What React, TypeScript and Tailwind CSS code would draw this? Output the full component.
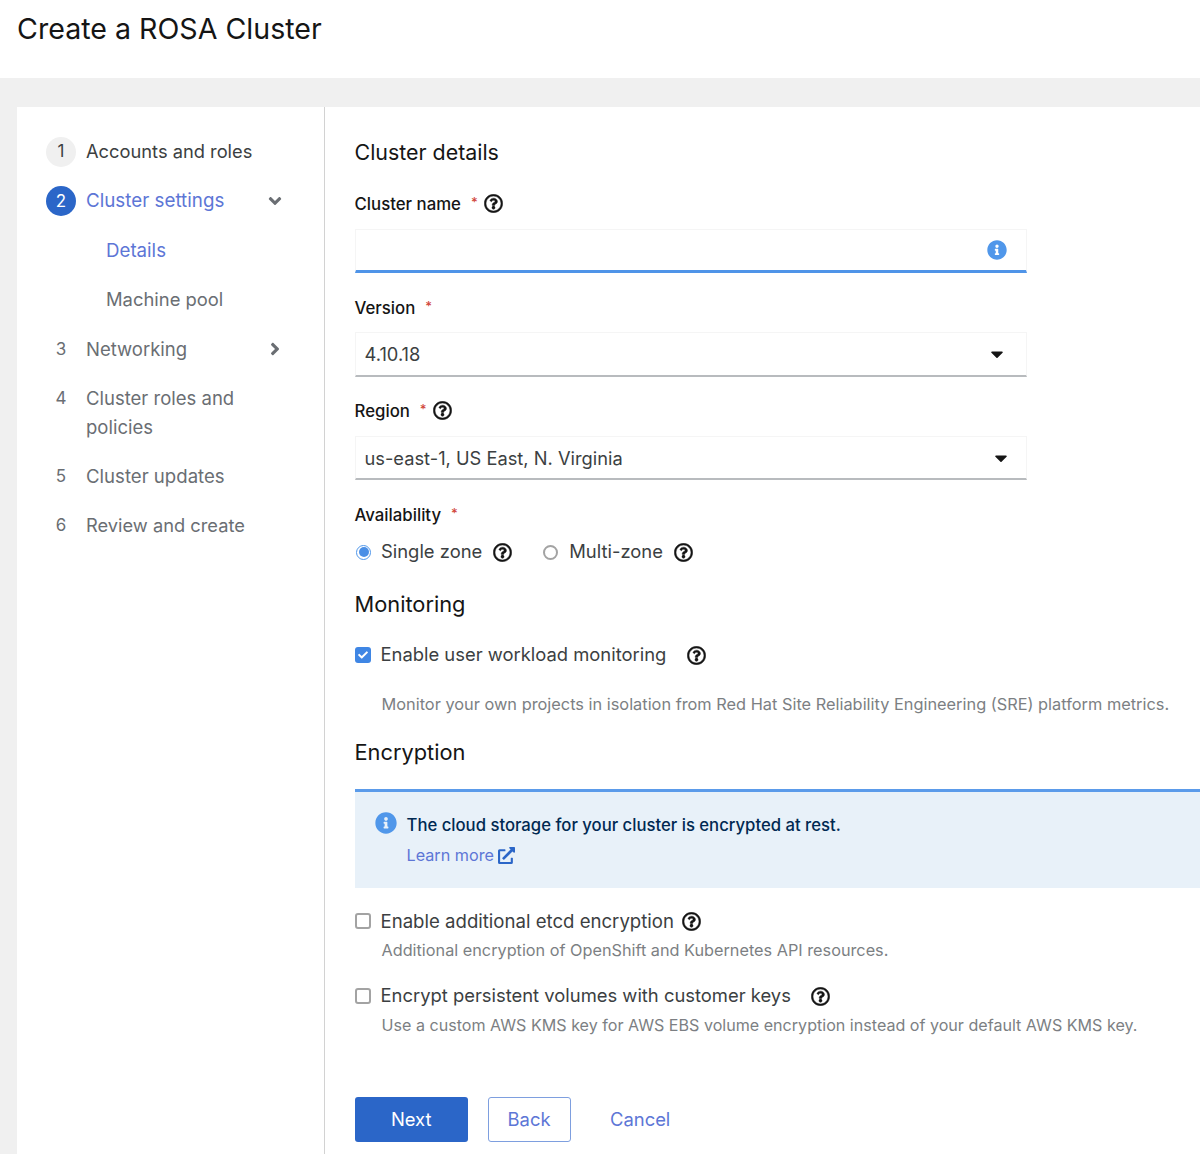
import { ReactNode } from 'react';
import {
  FaAngleDown,
  FaAngleRight,
  FaCaretDown,
  FaCheck,
  FaExternalLinkAlt,
  FaInfoCircle,
  FaRegQuestionCircle,
} from 'react-icons/fa';

function Help({ className = '' }: { className?: string }) {
  return (
    <FaRegQuestionCircle
      stroke="currentColor"
      strokeWidth={12}
      className={`h-[19px] w-[19px] shrink-0 text-[#151515] ${className}`}
    />
  );
}

function Label({ text, children }: { text: string; children?: ReactNode }) {
  return (
    <div className="flex h-[26px] items-center pt-[2px] text-[16.8px] font-medium text-[#151515]">
      <span>{text}</span>
      <span className="-mt-[5px] ml-[10px] text-[13px] text-[#d1463a]">*</span>
      {children}
    </div>
  );
}

function Select({ value, height, caretClass }: { value: string; height: string; caretClass: string }) {
  return (
    <div className={`flex w-[672px] items-center border border-b-2 border-[#f5f5f5] border-b-[#b8bbbe] pl-[9px] text-[18.3px] text-[#3c3f42] ${height}`}>
      <span className="pt-[2px]">{value}</span>
      <FaCaretDown className={`ml-auto h-[20px] w-[20px] text-[#151515] ${caretClass}`} />
    </div>
  );
}

function Checkbox({ label, gap, textClass }: { label: string; gap: string; textClass: string }) {
  return (
    <div className="flex h-[28px] items-center text-[#3c3f42]">
      <span className="h-[16px] w-[16px] rounded-[3px] border-2 border-[#a3a3a3] bg-white" />
      <span className={`ml-[10px] ${textClass}`}>{label}</span>
      <Help className={gap} />
    </div>
  );
}

const steps = [
  { n: '3', label: 'Networking', size: 'text-[18.5px]', arrow: true },
  { n: '4', label: 'Cluster roles and policies', size: 'text-[18.5px]' },
  { n: '5', label: 'Cluster updates', size: 'text-[18.6px]' },
  { n: '6', label: 'Review and create', size: 'text-[18.3px]' },
];

export default function App() {
  return (
    <div className="h-[1154px] overflow-hidden bg-[#f0f0f0] font-['Inter',sans-serif]">
      <header className="flex h-[78px] bg-white pl-[17px] pt-[8px]">
        <h1 className="text-[28.6px] leading-[42px] text-[#151515]">Create a ROSA Cluster</h1>
      </header>
      <div className="mt-[29px] ml-[17px] flex h-[1047px] bg-white">
        <nav className="w-[308px] shrink-0 border-r border-[#d2d2d2] pl-[29px] pr-[39px] pt-[30px] text-[18.5px] text-[#6a6e73]">
          <div className="flex h-[30px] items-center text-[#3c3f42]">
            <span className="flex h-[30px] w-[30px] items-center justify-center rounded-full bg-[#f0f0f0] text-[17px]">1</span>
            <span className="ml-[10px] text-[18.3px]">Accounts and roles</span>
          </div>
          <div className="mt-[19.4px] flex h-[30px] items-center text-[#5d76d6]">
            <span className="flex h-[30px] w-[30px] items-center justify-center rounded-full bg-[#2b66c8] text-[17px] text-white">2</span>
            <span className="ml-[10px] text-[18.8px]">Cluster settings</span>
            <FaAngleDown className="ml-auto h-[20px] w-[20px] text-[#6a6e73]" />
          </div>
          <div className="mt-[19.4px] flex h-[30px] items-center pl-[60px] text-[18.7px] text-[#5d76d6]">Details</div>
          <div className="mt-[19.4px] flex h-[30px] items-center pl-[60px] text-[18.4px]">Machine pool</div>
          {steps.map((s) => (
            <div key={s.n} className="mt-[19.4px] flex items-start leading-[29.6px]">
              <span className="w-[30px] shrink-0 text-center text-[17px]">{s.n}</span>
              <span className={`ml-[10px] w-[175px] ${s.size}`}>{s.label}</span>
              {s.arrow && <FaAngleRight className="ml-auto mt-[4px] h-[20px] w-[20px] text-[#6a6e73]" />}
            </div>
          ))}
        </nav>
        <main className="flex min-w-0 flex-1 flex-col pl-[29.5px] pt-[30px]">
          <h2 className="h-[30px] text-[21.4px] leading-[30px] text-[#151515]">Cluster details</h2>
          <div className="mt-[24px]">
            <Label text="Cluster name">
              <Help className="-mt-[4px] ml-[6px]" />
            </Label>
          </div>
          <div className="mt-[12px] flex h-[44px] w-[672px] items-center border border-b-[3px] border-[#f5f5f5] border-b-[#4f94e8] pr-[19px]">
            <FaInfoCircle className="ml-auto h-[20px] w-[20px] text-[#5097ea]" />
          </div>
          <div className="mt-[22px]">
            <Label text="Version" />
          </div>
          <div className="mt-[11px]">
            <Select value="4.10.18" height="h-[45px]" caretClass="mr-[19px]" />
          </div>
          <div className="mt-[21px]">
            <Label text="Region">
              <Help className="-mt-[4px] ml-[6px]" />
            </Label>
          </div>
          <div className="mt-[12px]">
            <Select value="us-east-1, US East, N. Virginia" height="h-[44px]" caretClass="mr-[15px]" />
          </div>
          <div className="mt-[22px]">
            <Label text="Availability" />
          </div>
          <div className="mt-[10px] flex h-[28px] items-center text-[18.4px] text-[#3c3f42]">
            <span className="ml-[1.5px] flex h-[15px] w-[15px] items-center justify-center rounded-full border border-[#5097ea]">
              <span className="h-[10px] w-[10px] rounded-full bg-[#4a8fe6]" />
            </span>
            <span className="ml-[10px]">Single zone</span>
            <Help className="ml-[11px]" />
            <span className="ml-[31px] h-[15px] w-[15px] rounded-full border-2 border-[#a3a3a3]" />
            <span className="ml-[11px]">Multi-zone</span>
            <Help className="ml-[11px]" />
          </div>
          <h2 className="mt-[23px] h-[30px] text-[21.8px] leading-[30px] text-[#151515]">Monitoring</h2>
          <div className="mt-[22px] flex h-[28px] items-center text-[18.4px] text-[#3c3f42]">
            <span className="flex h-[16px] w-[16px] items-center justify-center rounded-[3px] bg-[#3f86e4]">
              <FaCheck className="h-[10px] w-[10px] text-white" />
            </span>
            <span className="ml-[10px]">Enable user workload monitoring</span>
            <Help className="ml-[21px]" />
          </div>
          <p className="mt-[23px] h-[24px] pl-[27px] text-[16.35px] leading-[24px] whitespace-nowrap text-[#7c7f83]">
            Monitor your own projects in isolation from Red Hat Site Reliability Engineering (SRE) platform metrics.
          </p>
          <h2 className="mt-[21px] h-[30px] text-[21.8px] leading-[30px] text-[#151515]">Encryption</h2>
          <div className="mt-[22px] flex h-[99px] border-t-[3px] border-[#5b9bea] bg-[#e8f1f9] pl-[20px] pt-[20px]">
            <FaInfoCircle className="h-[22px] w-[22px] shrink-0 text-[#5097ea]" />
            <div className="ml-[10px]">
              <div className="mt-[1px] text-[16.7px] leading-[24px] font-medium text-[#002952]">
                The cloud storage for your cluster is encrypted at rest.
              </div>
              <div className="mt-[6px] flex items-center text-[16.2px] leading-[24px] text-[#5d76d6]">
                Learn more
                <FaExternalLinkAlt className="ml-[4px] h-[17px] w-[17px] text-[#2b66c8]" />
              </div>
            </div>
          </div>
          <div className="mt-[19px]">
            <Checkbox label="Enable additional etcd encryption" gap="ml-[8px]" textClass="pt-[2px] text-[18.6px]" />
          </div>
          <p className="mt-[3px] h-[24px] pl-[27px] text-[16.25px] leading-[24px] text-[#7c7f83]">
            Additional encryption of OpenShift and Kubernetes API resources.
          </p>
          <div className="mt-[20px]">
            <Checkbox label="Encrypt persistent volumes with customer keys" gap="ml-[20px]" textClass="text-[18.4px]" />
          </div>
          <p className="mt-[3px] h-[24px] pl-[27px] text-[16.1px] leading-[24px] whitespace-nowrap text-[#7c7f83]">
            Use a custom AWS KMS key for AWS EBS volume encryption instead of your default AWS KMS key.
          </p>
          <div className="mt-[60px] flex items-center text-[18.4px]">
            <button className="h-[45px] w-[113.5px] rounded-[3px] bg-[#2b66c8] text-white">Next</button>
            <button className="ml-[19.5px] h-[45px] w-[83px] rounded-[3px] border border-[#7e9fdf] text-[#5d76d6]">Back</button>
            <button className="ml-[39.5px] text-[#5d76d6]">Cancel</button>
          </div>
        </main>
      </div>
    </div>
  );
}
